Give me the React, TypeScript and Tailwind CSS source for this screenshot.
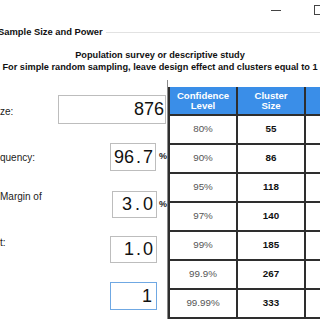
const rows = [
  ["80%", "55"],
  ["90%", "86"],
  ["95%", "118"],
  ["97%", "140"],
  ["99%", "185"],
  ["99.9%", "267"],
  ["99.99%", "333"],
];

export default function App() {
  return (
    <div className="w-[320px] h-[320px] overflow-hidden bg-white font-['Liberation_Sans',Arial,sans-serif] text-[#111]">
      {/* window caption */}
      <div className="h-[22px] flex items-start justify-end">
        <div className="mt-[10px] mr-[33px] w-[10px] h-px bg-[#444]" />
        <div className="mt-[5px] -mr-[4px] w-[10px] h-[10px] shrink-0 border border-[#444]" />
      </div>

      {/* group box title */}
      <div className="h-[20px] flex items-center -ml-[2px]">
        <span className="text-[9.4px] font-bold whitespace-nowrap">Sample Size and Power</span>
        <div className="flex-1 h-px bg-[#e2e2e2] ml-[3px]" />
      </div>

      <div className="mt-[7px] text-center text-[9.2px] font-bold leading-[12px] whitespace-nowrap">
        <div>Population survey or descriptive study</div>
        <div>For simple random sampling, leave design effect and clusters equal to 1</div>
      </div>

      <div className="mt-[7px] flex">
        {/* inputs */}
        <div className="w-[168px] shrink-0 border-r border-[#8a8a8a] text-[10px] text-[#222]">
          <div className="mt-[15px] h-[29px] flex items-center">
            <div className="w-[58px] mt-[4px]">ze:</div>
            <div className="w-[108px] h-full border border-[#bdbdbd] flex items-center justify-end pr-[1px] text-[18px] text-[#111]">
              876
            </div>
          </div>
          <div className="mt-[19px] h-[28px] flex items-center">
            <div className="w-[111px]">quency:</div>
            <div className="w-[46px] h-full border border-[#bdbdbd] flex items-center justify-end pr-[2px] text-[18px] text-[#111]">
              96<span className="mx-[2px]">.</span>7
            </div>
            <span className="ml-[3px] text-[9px] font-bold">%</span>
          </div>
          <div className="mt-[20px] h-[27px] flex items-center">
            <div className="w-[112px] self-start leading-[12px]">Margin of</div>
            <div className="w-[45px] h-full border border-[#bdbdbd] flex items-center justify-end pr-[3px] text-[18px] text-[#111]">
              3<span className="mx-[3px]">.</span>0
            </div>
            <span className="ml-[2px] text-[9px] font-bold">%</span>
          </div>
          <div className="mt-[18px] h-[27px] flex items-center">
            <div className="w-[110px] self-start mt-[1px] leading-[12px]">t:</div>
            <div className="w-[47px] h-full border border-[#bdbdbd] flex items-center justify-end pr-[3px] text-[18px] text-[#111]">
              1<span className="mx-[2px]">.</span>0
            </div>
          </div>
          <div className="mt-[19px] h-[28px] flex items-center">
            <div className="w-[110px]" />
            <div className="w-[47px] h-full border border-[#6fa8e3] flex items-center justify-end pr-[4px] text-[18px] text-[#111]">
              1
            </div>
          </div>
        </div>

        {/* confidence table */}
        <div className="mt-[7px] w-[160px] shrink-0 border-l-2 border-[#2e2e2e]">
          <div className="grid grid-cols-[68px_68px_68px] h-[29px] bg-[#3a8ee8] text-white text-[9.6px] font-bold leading-[10px]">
            <div className="border-r-2 border-b-2 border-[#2e2e2e] flex items-center justify-center text-center">
              Confidence
              <br />
              Level
            </div>
            <div className="border-r-2 border-b-2 border-[#2e2e2e] flex items-center justify-center text-center">
              Cluster
              <br />
              Size
            </div>
            <div className="border-b-2 border-[#2e2e2e]" />
          </div>
          {rows.map(([level, size]) => (
            <div key={level} className="grid grid-cols-[68px_68px_68px] h-[29px] text-[9.8px]">
              <div className="border-r-2 border-b-2 border-[#2e2e2e] flex items-center justify-center text-[#555]">
                {level}
              </div>
              <div className="border-r-2 border-b-2 border-[#2e2e2e] flex items-center justify-center font-bold text-[#111]">
                {size}
              </div>
              <div className="border-b-2 border-[#2e2e2e]" />
            </div>
          ))}
        </div>
      </div>
    </div>
  );
}
